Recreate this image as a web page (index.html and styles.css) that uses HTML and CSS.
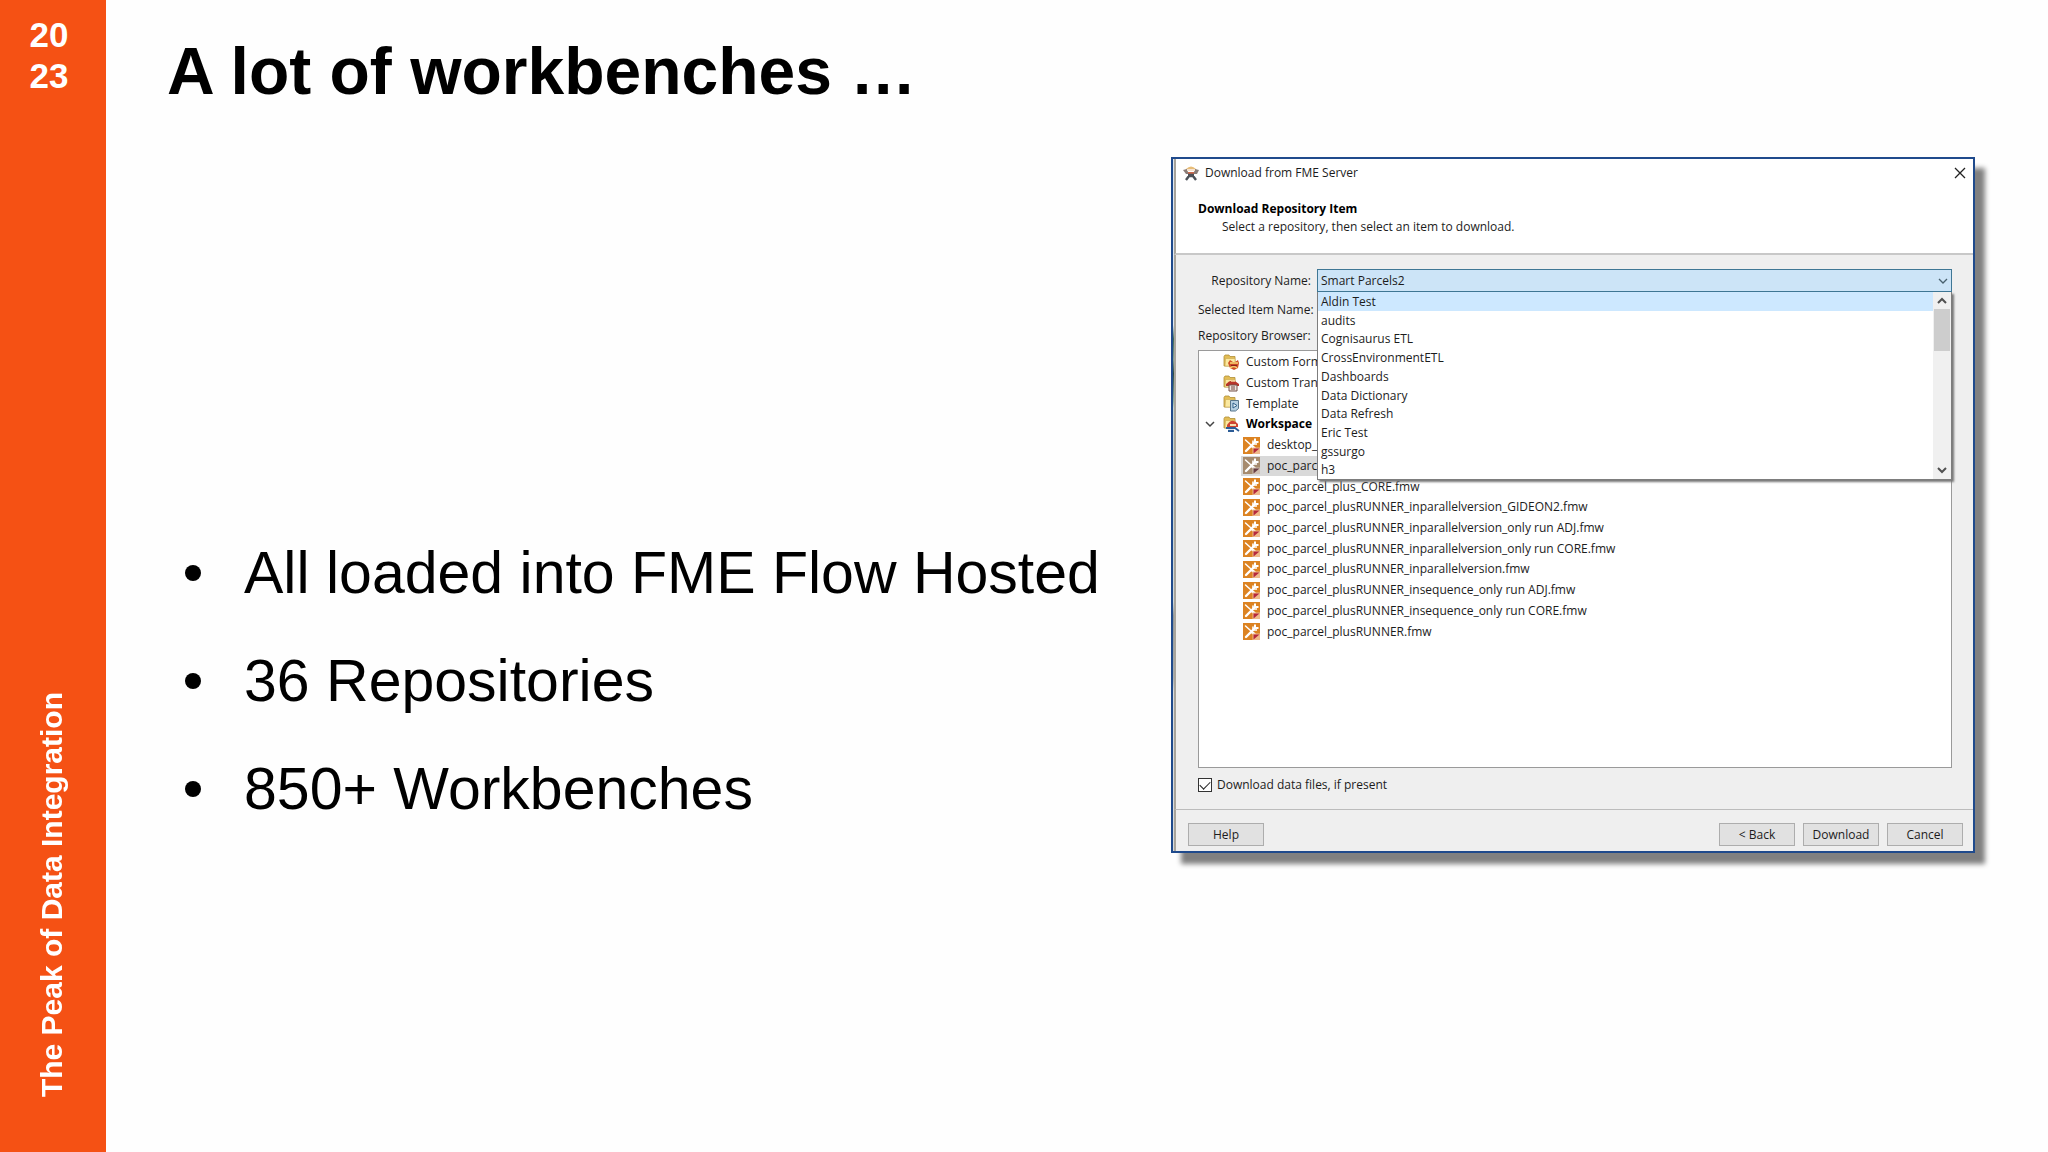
FILE: index.html
```
<!DOCTYPE html>
<html lang="en">
<head>
  <meta charset="UTF-8" />
  <meta name="viewport" content="width=device-width, initial-scale=1.0" />
  <title>A lot of workbenches …</title>
  <link rel="stylesheet" href="styles.css">
</head>
<body>
  <!-- shared icons -->
  <svg class="defs" width="0" height="0" aria-hidden="true">
    <symbol id="fmw" viewBox="0 0 17 17">
      <rect width="17" height="17" fill="#dc8322"/>
      <path d="M3 14 11 6" stroke="#fff" stroke-width="2.4" stroke-linecap="round"/>
      <path d="M12 1.500v3.500h3.500" fill="none" stroke="#fff" stroke-width="2"/>
      <path d="M10 3.500v3.500h4" fill="none" stroke="#fff" stroke-width="1.600"/>
      <path d="M2.500 3 7.500 7.500" stroke="#fff" stroke-width="1.500" stroke-linecap="round"/>
      <path d="m8 8.500 4 3" stroke="#fff" stroke-width="2.600"/>
      <path d="M9.500 17v-6.500H17V17z" fill="#efb98a"/>
      <path d="M10.500 16.500V11.500H16.500z" fill="#b5283c"/>
    </symbol>
    <symbol id="folder" viewBox="0 0 17 17">
      <path d="M1 2.500 2 1h4l1 1.500h5V12H1z" fill="#e3bd55" stroke="#b08f38" stroke-width=".8"/>
      <path d="M2.500 4.500H12V12H2z" fill="#fbe9a0" stroke="#c9a850" stroke-width=".6"/>
    </symbol>
  </svg>

  <div class="slide">
    <aside class="sidebar">
      <div class="year">20<br>23</div>
      <div class="tagline">The Peak of Data Integration</div>
    </aside>

    <main class="main">
      <h1>A lot of workbenches …</h1>
      <div class="content">
        <ul class="points">
          <li>All loaded into FME Flow Hosted</li>
          <li>36 Repositories</li>
          <li>850+ Workbenches</li>
        </ul>

        <form class="dialog">
          <header class="dialog-head">
            <div class="titlebar">
              <svg width="16" height="16" viewBox="0 0 16 16">
                <path d="M3 4q5-5 10 0l1 2H2z" fill="#e8bd78"/>
                <path d="M0 5 4 4l1 3h6l1-3 4 1-2 4H3z" fill="#8a7d78"/>
                <path d="M4 4h8v2H4z" fill="#f7e3cf"/>
                <path d="M5 7h6v2H5z" fill="#c9694c"/>
                <path d="m3 15 3-4h4l3 4M5 10h6" fill="none" stroke="#4c5158" stroke-width="2.400"/>
              </svg>
              <span>Download from FME Server</span>
              <button type="button" class="close" aria-label="Close">
                <svg width="12" height="12" viewBox="0 0 12 12"><path d="m1 1 10 10M11 1 1 11" stroke="#222" stroke-width="1.300"/></svg>
              </button>
            </div>
            <h2>Download Repository Item</h2>
            <p>Select a repository, then select an item to download.</p>
          </header>

          <div class="dialog-body">
            <div class="fields">
              <label for="repo">Repository Name:</label>
              <div class="combo">
                <select id="repo">
                  <option>Smart Parcels2</option>
                </select>
                <svg class="combo-arrow" width="10" height="10" viewBox="0 0 10 10"><path d="m1 3 4 4 4-4" fill="none" stroke="#48606e" stroke-width="1.300"/></svg>
                <div class="menu">
                  <ul role="listbox" aria-label="Repositories">
                    <li role="option" aria-selected="true" class="active">Aldin Test</li>
                    <li role="option">audits</li>
                    <li role="option">Cognisaurus ETL</li>
                    <li role="option">CrossEnvironmentETL</li>
                    <li role="option">Dashboards</li>
                    <li role="option">Data Dictionary</li>
                    <li role="option">Data Refresh</li>
                    <li role="option">Eric Test</li>
                    <li role="option">gssurgo</li>
                    <li role="option">h3</li>
                  </ul>
                  <div class="scrollbar">
                    <svg width="10" height="17" viewBox="0 0 10 17"><path d="m1 11 4-4 4 4" fill="none" stroke="#505050" stroke-width="2"/></svg>
                    <div class="thumb"></div>
                    <svg class="down" width="10" height="17" viewBox="0 0 10 17"><path d="m1 6 4 4 4-4" fill="none" stroke="#505050" stroke-width="2"/></svg>
                  </div>
                </div>
              </div>
              <label for="item">Selected Item Name:</label>
              <input id="item" type="text">
            </div>

            <div class="browser-label">Repository Browser:</div>
            <ul class="tree">
              <li>
                <svg width="17" height="17"><use href="#folder"/><path d="M5 9 7 6l3 2h2l3-2 1 3-1 5-4 2-4-2z" fill="#cf4e26"/><path d="M7 9h8M7 14q4-3 7 0" fill="none" stroke="#fad877" stroke-width="1.600"/><path d="M8 11.500h6" stroke="#8e1d1a" stroke-width="1.200"/></svg>
                Custom Form
              </li>
              <li>
                <svg width="17" height="17"><use href="#folder"/><path d="M3 9q6-7 13 0v2H3z" fill="#b8342a"/><path d="M8 6h4" stroke="#f6d6a0" stroke-width="1.500"/><path d="M6 10h8v6H6z" fill="#f1e7e2" stroke="#75534b"/><path d="M8 12h4M8 14h4" stroke="#70443c"/></svg>
                Custom Trans
              </li>
              <li>
                <svg width="17" height="17"><use href="#folder"/><path d="M7.500 5.500h8v8l-3 2.500h-5z" fill="#b5cfe2" stroke="#56748b"/><path d="M10 8v5l4-2.500z" fill="#edf6fb" stroke="#2e5f88"/></svg>
                Template
              </li>
              <li class="open">
                <svg class="twisty" width="10" height="10" viewBox="0 0 10 10"><path d="m1 3 4 4 4-4" fill="none" stroke="#444" stroke-width="1.500"/></svg>
                <svg width="17" height="17"><use href="#folder"/><path d="M4 9q5-8 11-1v3H4z" fill="#cf4431"/><path d="M7 8h6v2H7z" fill="#f8e0b0"/><path d="M3 12h9l4 3M5 15h6" fill="none" stroke="#2c5c96" stroke-width="1.800"/><path d="M5 13.500h6" stroke="#d4e5f3"/></svg>
                Workspace
              </li>
              <li class="file"><svg width="17" height="17"><use href="#fmw"/></svg>desktop_p</li>
              <li class="file selected"><svg width="17" height="17"><use href="#fmw"/></svg>poc_parc</li>
              <li class="file"><svg width="17" height="17"><use href="#fmw"/></svg>poc_parcel_plus_CORE.fmw</li>
              <li class="file"><svg width="17" height="17"><use href="#fmw"/></svg>poc_parcel_plusRUNNER_inparallelversion_GIDEON2.fmw</li>
              <li class="file"><svg width="17" height="17"><use href="#fmw"/></svg>poc_parcel_plusRUNNER_inparallelversion_only run ADJ.fmw</li>
              <li class="file"><svg width="17" height="17"><use href="#fmw"/></svg>poc_parcel_plusRUNNER_inparallelversion_only run CORE.fmw</li>
              <li class="file"><svg width="17" height="17"><use href="#fmw"/></svg>poc_parcel_plusRUNNER_inparallelversion.fmw</li>
              <li class="file"><svg width="17" height="17"><use href="#fmw"/></svg>poc_parcel_plusRUNNER_insequence_only run ADJ.fmw</li>
              <li class="file"><svg width="17" height="17"><use href="#fmw"/></svg>poc_parcel_plusRUNNER_insequence_only run CORE.fmw</li>
              <li class="file"><svg width="17" height="17"><use href="#fmw"/></svg>poc_parcel_plusRUNNER.fmw</li>
            </ul>

            <label class="check">
              <input type="checkbox" checked>
              Download data files, if present
            </label>
          </div>

          <footer class="dialog-foot">
            <button type="button" class="btn help">Help</button>
            <button type="button" class="btn">&lt; Back</button>
            <button type="button" class="btn">Download</button>
            <button type="button" class="btn">Cancel</button>
          </footer>
        </form>
      </div>
    </main>
  </div>
</body>
</html>
```
FILE: styles.css
```
* {
  box-sizing: border-box;
}
body {
  margin: 0;
  background: #fefefe;
  color: #000;
  font-family: "Liberation Sans", Arial, sans-serif;
}
h1, h2, p, ul {
  margin: 0;
  padding: 0;
}
ul {
  list-style: none;
}
.defs {
  position: absolute;
}
.slide {
  display: flex;
  min-height: 100vh;
}

/* orange strip */
.sidebar {
  width: 106px;
  background: #f55114;
  color: #fff;
  font-weight: bold;
  display: flex;
  flex-direction: column;
  justify-content: space-between;
  align-items: center;
  padding: 14px 8px 55px 0;
}
.year {
  font-size: 35px;
  line-height: 41px;
}
.tagline {
  writing-mode: vertical-rl;
  transform: rotate(180deg);
  font-size: 30px;
  line-height: 36px;
  white-space: nowrap;
  margin-left: 6px;
}

.main {
  flex: 1;
  padding: 32px 73px 0 61px;
}
h1 {
  font-size: 66px;
  line-height: 78px;
}
.content {
  display: grid;
  grid-template-columns: 1004fr 804fr;
  align-items: start;
  padding-top: 47px;
}
.points {
  padding-top: 362px;
  font-size: 59px;
  line-height: 108px;
  white-space: nowrap;
}
.points li {
  display: flex;
  align-items: center;
  gap: 43px;
  padding-left: 18px;
}
.points li::before {
  content: "";
  width: 16px;
  height: 16px;
  border-radius: 50%;
  background: #000;
}

/* dialog */
.dialog {
  border: 2px solid #1f4a8c;
  box-shadow: 10px 11px 5px #808080;
  /* sliver of the window behind, left of the frame */
  background: linear-gradient(#dfe8f2 24%, #3f6b58 26%, #86a294 29%, #2f4f45 31%, #8fb09d 35%, #c5d3cd 36%, #cfd8da 64%, #8f979a 66%, #a9b0b2 75%, #d8dcde 77%);
  padding-left: 1px;
  font-family: "Open Sans", "Noto Sans", sans-serif;
  font-size: 12px;
  line-height: 18px;
  color: #1c1c1c;
}
.dialog-head,
.dialog-body,
.dialog-foot {
  border-left: 2px solid #a8a49c;
  background: #efefef;
}
.dialog-head {
  background: #fff;
  border-bottom: 2px solid #c8c8c8;
  height: 96px;
}
.titlebar {
  display: flex;
  align-items: center;
  gap: 6px;
  height: 28px;
  padding: 0 7px;
}
.close {
  margin-left: auto;
  border: 0;
  background: none;
  padding: 0;
  display: flex;
}
h2 {
  font-size: 12px;
  line-height: 18px;
  padding: 13px 22px 0;
  color: #000;
}
.dialog-head p {
  padding-left: 46px;
}
.dialog-body {
  padding: 14px 21px 0 22px;
}
.fields {
  display: grid;
  grid-template-columns: 113px 1fr;
  column-gap: 6px;
  row-gap: 6px;
  align-items: center;
}
.fields label {
  text-align: right;
  white-space: nowrap;
}
.combo {
  position: relative;
}
.combo select {
  display: block;
  width: 100%;
  height: 23px;
  appearance: none;
  border: 1px solid #3f7795;
  border-radius: 0;
  background: #cce4f7;
  font: inherit;
  color: inherit;
  padding: 0 3px;
}
.combo-arrow {
  position: absolute;
  right: 4px;
  top: 7px;
}
.menu {
  position: absolute;
  top: 100%;
  left: 0;
  right: 0;
  height: 188px;
  display: flex;
  background: #fff;
  border: 1px solid #7d7d7d;
  border-top: 0;
  box-shadow: 2px 2px 2px #777;
  z-index: 1;
}
.menu ul {
  flex: 1;
  display: grid;
  grid-template-rows: repeat(10, 1fr);
}
.menu li {
  padding-left: 3px;
  line-height: 20px;
}
.menu .active {
  background: #cde8ff;
}
.menu ul {
  height: 187px;
}
.menu li {
  min-height: 0;
}
.scrollbar {
  width: 18px;
  background: #f0f0f0;
  display: flex;
  flex-direction: column;
  align-items: center;
}
.thumb {
  width: 16px;
  height: 42px;
  background: #cdcdcd;
}
.down {
  margin-top: auto;
}
#item {
  height: 23px;
  border: 1px solid #999;
  background: #fff;
}
.browser-label {
  padding: 6px 0 5px;
}
.tree {
  border: 1px solid #9a9a9a;
  background: #fff;
  display: grid;
  grid-template-rows: repeat(14, 1fr);
  height: 418px;
  padding: 1px 0 125px;
}
.tree li {
  display: flex;
  align-items: center;
  gap: 6px;
  padding-left: 24px;
  white-space: nowrap;
}
.tree li.open {
  padding-left: 6px;
  font-weight: bold;
  color: #000;
}
.twisty {
  margin-right: 2px;
}
.tree li.file {
  padding-left: 44px;
  gap: 7px;
}
.tree li.selected {
  width: 160px;
  background: linear-gradient(to right, transparent 42px, #d9d9d9 42px);
}
.selected svg {
  filter: saturate(0.3);
}
.check {
  display: flex;
  align-items: center;
  gap: 5px;
  padding: 8px 0 15px;
}
.check input {
  appearance: none;
  width: 14px;
  height: 14px;
  margin: 0;
  border: 1px solid #333;
  background: #fff;
  display: grid;
  place-items: center;
}
.check input:checked::before {
  content: "";
  width: 9px;
  height: 5px;
  border-left: 1px solid #222;
  border-bottom: 1px solid #222;
  transform: translateY(-1px) rotate(-45deg);
}
.dialog-foot {
  border-top: 1px solid #bcbcbc;
  display: flex;
  gap: 8px;
  padding: 13px 10px 5px 12px;
}
.btn {
  width: 76px;
  height: 23px;
  padding: 0;
  border: 1px solid #adadad;
  background: #e1e1e1;
  font: inherit;
  line-height: 18px;
  color: inherit;
}
.help {
  margin-right: auto;
}
```
